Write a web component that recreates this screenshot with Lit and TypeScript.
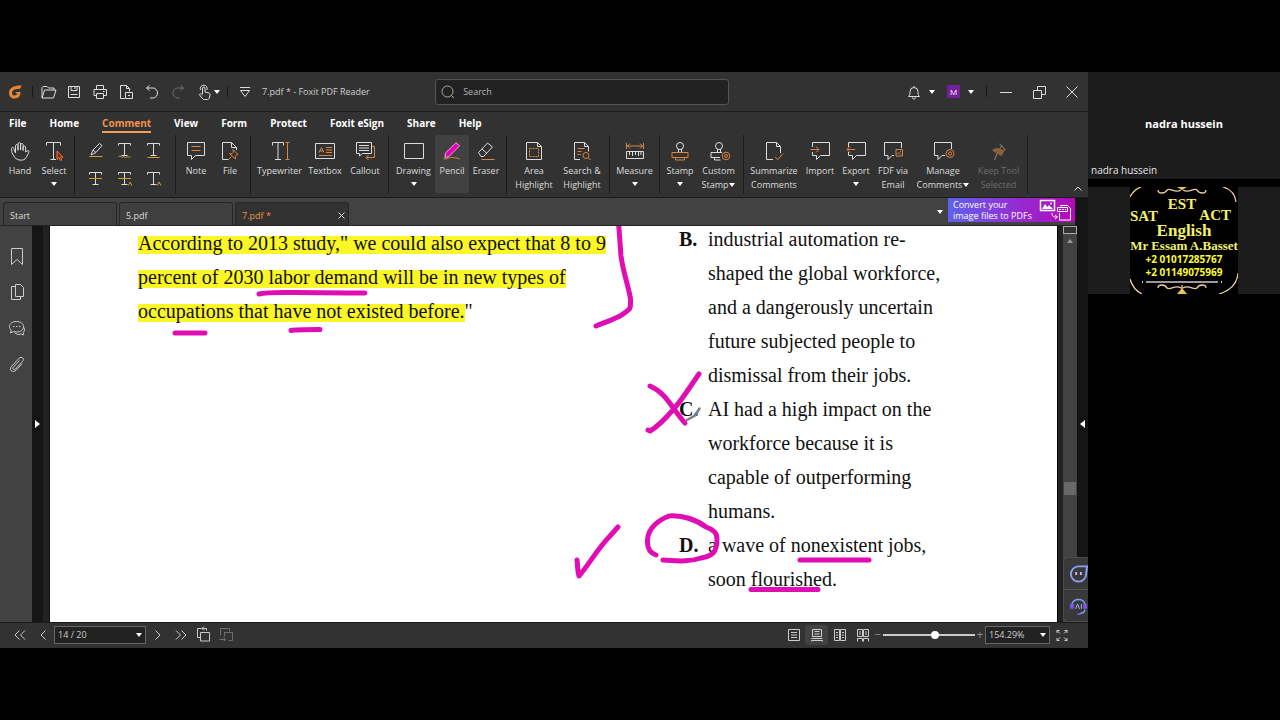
import { LitElement, html, css, svg, nothing } from "lit";
import { customElement, property } from "lit/decorators.js";
import { classMap } from "lit/directives/class-map.js";

/* Icon glyphs on a 20 x 20 grid. Class "o" = orange stroke, "of" = orange fill, "y" = yellow stroke. */
const T = svg`<path d="M3.500 5.500V3.500h12v2M9.500 3.500v12M6.500 15.500h6"/>`;
const bubble = svg`<path d="M1.500 1.500h17v13h-9l-4 4v-4h-4z"/>`;
const icons: Record<string, unknown> = {
  open: svg`<path d="M4 16V5.500l1-1h4l1.500 1.500h5.500v2M4 16l2.500-8h11.500l-2.500 8z"/>`,
  save: svg`<path d="M4.500 4.500h11v11h-11zM7 4.500v4h6v-4M11 5v2M6.500 12.500h7"/>`,
  print: svg`<path d="M6.500 7.500v-4h7v4M6.500 13.500h-2.500v-6h12.500v6h-3M6.500 11.500h7v5h-7zM13 9.500h1.500"/>`,
  docs: svg`<path d="M9 16.500h-4.500v-13h6l3 3v3M10.500 3.500v3h3M9.500 10.500h7v6h-7zM12 13.500h2"/>`,
  undo: svg`<path d="M7.500 3.500l-3 2.500 3 2.500M4.500 6h6.500a4.500 5 0 0 1 0 10h-3"/>`,
  redo: svg`<path d="M12.500 3.500l3 2.500-3 2.500M15.500 6h-6a4.500 5 0 0 0 0 10h2"/>`,
  touch: svg`<path d="M8.500 12V6a1.300 1.300 0 0 1 2.500 0v4l4 1c1 .3 1.200 1 1 2l-.7 3c-.4 1-1 1.500-2 1.500h-3c-1 0-1.500-.5-2-1l-3-4c.8-1.200 2-.8 3.200.5M6.500 8a3.500 3.500 0 1 1 6.500 0"/>`,
  more: svg`<path d="M5 5.500h10M5.500 8.500h9l-4.500 6z"/>`,
  bell: svg`<path d="M4.500 14.500h11c-1.500-1.500-1.500-3-1.500-5a4 4 0 0 0-8 0c0 2 0 3.500-1.500 5zM8.500 15.500a1.500 1.500 0 0 0 3 0M10 4v1.500"/>`,
  min: svg`<path d="M4 10.500h12"/>`,
  restore: svg`<path d="M4.500 8.500h8v8h-8zM8.500 8v-3.500h8v8h-3.500"/>`,
  close: svg`<path d="M4.500 4.500l11 11M15.500 4.500l-11 11"/>`,
  search: svg`<circle cx="9.500" cy="9.500" r="5.500"/><path d="M13.500 13.500l2.500 2.500"/>`,
  hand: svg`<path d="M5.500 12V4.500a1.300 1.300 0 0 1 2.500 0V9.500M8 9V3a1.300 1.300 0 0 1 2.600 0v6M10.600 9V3.500a1.300 1.300 0 0 1 2.500 0V9.500M13.100 9.500V6a1.300 1.300 0 0 1 2.500 0v5l1.400-1c1.500-1 2.500.2 1.800 1.500C17.500 14 16.500 16.500 15 18c-1.500 1.500-6 1.600-8.500 0C4 16 1.500 11.500 1.800 10.500L1.500 7.500c.2-1.500 2-1.500 2.400 0L5.500 12"/>`,
  select: svg`<path d="M2.500 4.500v-3h14v3M9.500 1.500v17M6.500 18.500h5.500"/><path class="sel" d="M13 10v8.500l2-1.800 1.500 2.800 1.200-.6-1.300-2.700h2.600z"/>`,
  hl: svg`<path d="M7 10l6.500-6.500 2.500 2L10 12.500l-5 2.500zM7 10l3 2.500"/><path class="y" d="M3.500 16.500h13"/>`,
  squig: svg`${T}<path class="y" d="M3.500 17c1-1.500 2-1.500 3 0s2-1.500 3 0 2-1.500 3 0 2-1.500 3 0"/>`,
  under: svg`${T}<path class="y" d="M3.500 17.500h12"/>`,
  strike: svg`${T}<path class="y" d="M3 9.500h13"/>`,
  repl: svg`${T}<path class="y" d="M3 9.500h13M13.500 16.500l1.700-3.500 1.800 3.500"/>`,
  ins: svg`${T}<path class="y" d="M13.500 16.500l1.700-3.500 1.800 3.500"/>`,
  note: svg`${bubble}<path class="o" d="M5.500 5.500h9M5.500 9.500h9"/>`,
  file: svg`<path d="M8 18.500H2.500v-17h9l5 5V9M11.500 1.500v5h5"/><path class="o" d="M13 8.500l5 5-1.500.5-1.200 1.500.2 2.500-6-5.500 2.500.2 1.300-1.500zM11.500 15.500l-3.500 3.500"/>`,
  type: svg`<path d="M2.500 4.500v-3h11v3M8 1.500v17M5 18.500h6"/><path class="o" d="M15.500 1.500h4M17.500 1.500v17M15.500 18.500h4"/>`,
  tbox: svg`<path d="M.5 2.500h19v15H.5z"/><path class="o" d="M4 11.500l2.500-5 2.500 5M5 10h3M11 6.500h6M11 9h6M11 11.500h6M4 14.500h13"/>`,
  callout: svg`<path d="M1.500 1.500h15v11h-9l-3 2.500v-2.500h-3zM4 4.500h10M4 7h10M4 9.500h10"/><path class="o" d="M17 5.500h2.500v11h-8M13.500 14l-2.500 2.500 2.500 2.500"/>`,
  rect: svg`<path d="M.5 2.500h19v15H.5z"/>`,
  pencil: svg`<path class="pk" d="M3.500 12L14 1.800l3.500 3L7 15.500l-4 1z"/><path class="o" d="M1.500 18c4 .5 6-2.500 9-1.500 2 .7 3-.5 7 1.500"/>`,
  eraser: svg`<path d="M2.500 11.500l9-9.500 5 4-9 9.500h-2.500zM6 8l5 4.500"/><path class="o" d="M5.500 18.500h13"/>`,
  area: svg`<path d="M2.500 1.500h11l4 4v13h-15zM13.500 1.500v4h4"/><path class="o" stroke-dasharray="2 1" d="M5.500 7.500h9v8h-9z"/>`,
  srch: svg`<path d="M8 18.500H2.500v-17h10l4 4v5M12.500 1.500v4h4"/><path class="o" d="M5.500 7.500h7M5.500 10.500h4M5.500 13.500h3"/><circle class="o" cx="14" cy="14.500" r="3"/><path class="o" d="M16.500 17l2 2"/>`,
  measure: svg`<path class="o" d="M1.500 2v6M18.500 2v6M2.500 5h15M5 2.500L2.500 5 5 7.500M15 2.500L17.500 5 15 7.500"/><path d="M1.500 10.500h17v7h-17zM4.500 11v3M7.500 11v4M10.500 11v3M13.500 11v4M16 11v3"/>`,
  stamp: svg`<circle cx="10" cy="5" r="3.500"/><path d="M8.500 8v3.500M11.500 8v3.500"/><path class="o" d="M2 11.500h16v5H2zM5.500 16.500v2.500h9v-2.500"/>`,
  cstamp: svg`<circle cx="10" cy="5" r="3.500"/><path d="M8.500 8v3.500M11.500 8v3.500M13 11.500H2v5h9M5.500 16.500v2.500h6"/><circle class="o" cx="17" cy="15" r="3.800"/><circle class="o" cx="17" cy="15" r="1.500"/>`,
  summ: svg`<path d="M9 18.500H2.500v-17h10l4 4V12M12.500 1.500v4h4"/><path class="o" d="M11 16l3 2.500 5-6"/>`,
  imp: svg`<path d="M2.500 6v-4.500h17v13h-9l-4 4v-4h-4V11"/><path class="o" d="M.5 8.500h8M6 5.500l3 3-3 3"/>`,
  exp: svg`<path d="M2.500 6v-4.500h17v13h-9l-4 4v-4h-4V11"/><path class="o" d="M1 8.500h8M4 5.500l-3 3 3 3"/>`,
  fdf: svg`<path d="M11 14.500h-2l-4 4v-4h-3.500v-13h17V7"/><path class="o" d="M13 8.500h6.500v6.500H13zM14 13.500l2-2 2 2M17 10.500h1"/>`,
  manage: svg`<path d="M12 14.500h-3l-4 4v-4h-3.500v-13h17V8"/><circle class="o" cx="17" cy="12.500" r="4"/><circle class="o" cx="17" cy="12.500" r="1.600"/>`,
  pin: svg`<path d="M10.500 3l6 5.500M13 4.500l-2 3M15.500 7.500l-1 3M8 13l-2.500 6"/><path class="of" d="M3 9.500c3-3.500 8-3 11-.5l1 1.500c-.5 1.500-1.500 3-2.500 4.500l-4-2z"/>`,
  bookmark: svg`<path d="M4.500 1.500h11v16l-5.500-5-5.500 5z"/>`,
  pages: svg`<path d="M8.500 1.500v12h8v-9l-3-3h-5zM8.500 3.500h-4v13h9v-3"/>`,
  chat: svg`<path d="M9.500 2.500c4 0 7 2 7 5.200s-3 5.300-7 5.300c-1 0-2-.2-3-.5l-3 1.500.7-3C3 10 2.500 9 2.500 7.700c0-3.200 3-5.200 7-5.200zM16.500 8c1.500 2 1.200 4-.3 5.500l.3 2.500-2.500-1c-2.500 1-5 .3-6.500-1.500M6 7.500h1.500M9 7.500h1.500M12 7.500h1.500"/>`,
  clip: svg`<path d="M12.500 5.500l-6 6.500c-1.500 2 .5 3.500 2 2l7-7.500c2.500-3-1-5.500-3.500-3.200l-7.500 8c-3 3.700 1.200 7 4.500 4l6-6.500"/>`,
  first: svg`<path d="M9.500 5.500L5 10l4.500 4.500M15 5.500L10.500 10l4.500 4.500"/>`,
  prev: svg`<path d="M12.500 5.500L8 10l4.500 4.500"/>`,
  next: svg`<path d="M7.500 5.500L12 10l-4.500 4.500"/>`,
  last: svg`<path d="M5 5.500L9.500 10 5 14.500M10.500 5.500L15 10l-4.500 4.500"/>`,
  viewb: svg`<path d="M6 12.500H3.500v-9h4M12.500 5.500v-2H8M10 1.500l-2 2 2 2M6.500 7.500h9v8.500h-9z"/>`,
  viewf: svg`<path d="M3.500 10.500v-7h9v3M7.500 7.500h8v8h-4M7.500 7.500v4M2.500 14.500h6M6.500 12.500l2 2-2 2"/>`,
  v1: svg`<path d="M4.500 4.500h11v11h-11zM7 7.500h6M7 10h6M7 12.500h6"/>`,
  v2: svg`<path d="M5.500 4.500h9v7h-9zM7.500 6.500h5M7.500 9h5M4.500 13.500h11M4.500 16.500v-1h11v1"/>`,
  v3: svg`<path d="M4.500 4.500h5v11h-5zM10.500 4.500h5v11h-5zM6 7.500h2M6 10h2M6 12.500h2M12 7.500h2M12 10h2M12 12.500h2"/>`,
  v4: svg`<path d="M4.500 4.500h5v7h-5zM10.500 4.500h5v7h-5zM6 7h2M6 9h2M12 7h2M12 9h2M4.500 16.500v-3h5v3M10.500 16.500v-3h5v3"/>`,
  full: svg`<path d="M8 8.500L5 5.500M5 8V5.500h2.500M12 8.500l3-3M12.500 5.500H15V8M8 12.500l-3 3M5 13v2.500h2.500M12 12.500l3 3M12.500 15.500H15V13"/>`,
  up: svg`<path d="M6.500 11.500L10 8l3.500 3.500"/>`,
};

@customElement("ui-icon")
export class UiIcon extends LitElement {
  @property() name = "";
  static styles = css`
    :host { display: block; width: 20px; height: 20px; flex: none; }
    svg { display: block; fill: none; stroke: currentColor; overflow: visible; }
    .o { stroke: #d9843f; }
    .of { fill: #d9843f; stroke: none; }
    .y { stroke: #c9a227; }
    .sel { fill: #8a2a12; stroke: #e8743a; }
    .pk { fill: #e600b8; stroke: #f2a6dd; }
  `;
  render() {
    return html`<svg width="20" height="20" viewBox="0 0 20 20" aria-hidden="true">${icons[this.name]}</svg>`;
  }
}

const caret = html`<svg class="caret" width="6" height="4" viewBox="0 0 6 4" aria-hidden="true"><path d="M0 0h6L3 4z" fill="#fff" /></svg>`;

type Tool = { icon: string; w: string; text: string; text2?: string; drop?: boolean; on?: boolean; off?: boolean };
const groups: (Tool[] | "markup")[] = [
  [{ icon: "hand", w: "w34", text: "Hand" }, { icon: "select", w: "w34", text: "Select", drop: true }],
  "markup",
  [{ icon: "note", w: "w34", text: "Note" }, { icon: "file", w: "w34", text: "File" }],
  [{ icon: "type", w: "w51", text: "Typewriter" }, { icon: "tbox", w: "w40", text: "Textbox" }, { icon: "callout", w: "w40", text: "Callout" }],
  [{ icon: "rect", w: "w43", text: "Drawing", drop: true }, { icon: "pencil", w: "w34", text: "Pencil", on: true }, { icon: "eraser", w: "w34", text: "Eraser" }],
  [{ icon: "area", w: "w48", text: "Area", text2: "Highlight" }, { icon: "srch", w: "w48", text: "Search &", text2: "Highlight" }],
  [{ icon: "measure", w: "w43", text: "Measure", drop: true }],
  [{ icon: "stamp", w: "w34", text: "Stamp", drop: true }, { icon: "cstamp", w: "w43", text: "Custom", text2: "Stamp", drop: true }],
  [
    { icon: "summ", w: "w54", text: "Summarize", text2: "Comments" },
    { icon: "imp", w: "w38", text: "Import" },
    { icon: "exp", w: "w34", text: "Export", drop: true },
    { icon: "fdf", w: "w40", text: "FDF via", text2: "Email" },
    { icon: "manage", w: "w60", text: "Manage", text2: "Comments", drop: true },
    { icon: "pin", w: "w51", text: "Keep Tool", text2: "Selected", off: true },
  ],
];

const markup = [
  ["hl", "Highlight"], ["squig", "Squiggly underline"], ["under", "Underline"],
  ["strike", "Strikeout"], ["repl", "Replace text"], ["ins", "Insert text"],
];
const menus = ["File", "Home", "Comment", "View", "Form", "Protect", "Foxit eSign", "Share", "Help"];

const iconBtn = (icon: string, label: string, cls = "") =>
  html`<button class="ib ${cls}" aria-label=${label}><ui-icon name=${icon}></ui-icon></button>`;

@customElement("app-root")
export class AppRoot extends LitElement {
  static styles = css`
    :host {
      display: grid;
      grid-template-columns: minmax(0, 85fr) minmax(0, 15fr);
      box-sizing: border-box;
      min-height: 100vh;
      padding: 72px 0;
      background: #000;
      color: #dcdcdc;
      font: 9px/14px "Open Sans", "Noto Sans", sans-serif;
    }
    * { box-sizing: border-box; }
    button, input, select { font: inherit; color: inherit; background: none; border: 0; padding: 0; margin: 0; }
    button { display: flex; align-items: center; justify-content: center; }
    a { color: inherit; text-decoration: none; }
    .reader { display: flex; flex-direction: column; background: #323232; min-width: 0; overflow: hidden; }

    .titlebar { display: grid; grid-template-columns: 40% 27% 1fr; align-items: center; height: 40px; border-bottom: 1px solid #1d1d1d; }
    .quick, .window { display: flex; align-items: center; }
    .window { justify-content: flex-end; }
    .ib { width: 26px; height: 26px; }
    .logo { width: 30px; }
    .vsep { width: 1px; height: 11px; background: #181818; margin: 0 2px; }
    .vsep.roomy { margin: 0 4px; }
    .vsep.far { margin-left: 12px; }
    .touch { width: 32px; height: 26px; }
    .bell { gap: 5px; }
    .caret { display: block; flex: none; }
    .dim { color: #6e6e6e; }
    .title { margin-left: 4px; white-space: nowrap; color: #cfcfcf; }
    .search { display: flex; align-items: center; height: 26px; gap: 5px; padding-left: 2px; border: 1px solid #555; border-radius: 3px; background: #222; color: #aaa; }
    .search input { flex: 1; min-width: 0; outline: 0; }
    .search input::placeholder { color: #b4b4b4; opacity: 1; }
    .avatar { width: 13px; height: 13px; margin: 0 8px 0 12px; background: #75209a; color: #fff; font-size: 8px; }
    .wide { width: 33px; }

    .menu { display: flex; gap: 23px; padding: 4px 9px 0; height: 23px; color: #fff; font-size: 10px; font-weight: 700; white-space: nowrap; }
    .menu a { height: 17px; }
    .menu .current { color: #f0924a; border-bottom: 2px solid #f0a05c; }

    .ribbon { display: flex; position: relative; height: 63px; border-bottom: 1px solid #1c1c1c; }
    .group { display: flex; height: 59px; padding: 0 3px; border-right: 1px solid #1c1c1c; }
    .markup { display: grid; grid-template-columns: repeat(3, 29px); grid-template-rows: 29px 29px; padding: 0 7px 0 6px; }
    .mk { width: 29px; height: 29px; }
    .tool { flex-direction: column; justify-content: flex-start; padding-top: 6px; height: 58px; border-radius: 2px; white-space: nowrap; }
    .tool ui-icon { margin-bottom: 3px; }
    .tool .caret { margin-top: 4px; }
    .second { display: flex; align-items: center; }
    .tool .second .caret { margin: 0 0 0 1px; }
    .on { background: #414141; }
    .off { color: #6c6c6c; }
    .off ui-icon { opacity: 0.55; color: #ccc; }
    .w34 { width: 34px; } .w38 { width: 38px; } .w40 { width: 40px; } .w43 { width: 43px; }
    .w48 { width: 48px; } .w51 { width: 51px; } .w54 { width: 54px; } .w60 { width: 60px; }
    .collapse { align-self: flex-end; margin-left: auto; width: 20px; height: 16px; }

    .backdrop { background: #151515; }
    .tabs { display: flex; align-items: flex-end; height: 28px; margin-right: 13px; padding-left: 3px; gap: 2px; background: #424242; border-bottom: 1px solid #222; }
    .tab { display: flex; align-items: center; justify-content: space-between; width: 114px; height: 23px; padding: 3px 0 0 6px; border: 1px solid #262626; border-bottom: 0; border-radius: 3px 3px 0 0; background: #3f3f3f; }
    .tab.active { background: #323232; color: #f0924a; }
    .tab button { width: 14px; color: #ddd; }
    .fill { flex: 1; }
    .tablist { width: 12px; height: 27px; }
    .promo { display: flex; align-items: center; align-self: flex-start; justify-content: space-between; width: 127px; height: 24px; padding: 0 4px 0 5px; color: #fff; line-height: 11px; white-space: nowrap; background: linear-gradient(90deg, #5c62ee, #9030d4 50%, #b508b8); }
    .promo svg { flex: none; overflow: visible; }

    .work { display: flex; flex: 1; min-height: 0; position: relative; background: #151515; }
    .nav { display: flex; flex-direction: column; align-items: center; gap: 16px; width: 32px; padding: 21px 0 0 2px; background: #424242; color: #ccc; }
    .nav .ib { width: 20px; height: 20px; }
    .strip { display: flex; align-items: center; justify-content: center; width: 11px; }
    .gutter { width: 7px; background: #222; border-right: 1px solid #111; }
    .page { position: relative; flex: 1; min-width: 0; min-height: 396px; overflow: hidden; background: #fff; color: #111; font: 20px/34px "Liberation Serif", "Times New Roman", serif; }
    .columns { display: grid; grid-template-columns: 541px 1fr; padding-left: 88px; }
    .passage { margin: 0; max-width: 490px; }
    mark { color: inherit; background: linear-gradient(transparent 4px, #fbf726 4px); -webkit-box-decoration-break: clone; box-decoration-break: clone; }
    .choices { list-style: none; margin: -4px 0 0; padding: 0; }
    .choices li { display: grid; grid-template-columns: 29px minmax(0, 240px); }
    .ink { position: absolute; left: 0; top: 0; fill: none; stroke: #e00cb4; stroke-width: 5; stroke-linecap: round; stroke-linejoin: round; }
    .scroll { display: flex; flex-direction: column; align-items: center; width: 14px; background: #424242; }
    .split { width: 14px; height: 8px; border: 1px solid #aaa; background: #333; }
    .arrow { margin: 5px 0 auto; }
    .thumb { width: 12px; height: 13px; margin-bottom: 127px; background: #686868; }
    .rgut { width: 6px; background: #222; border-left: 1px solid #000; }
    .ai { position: absolute; right: 0; bottom: 0; display: flex; flex-direction: column; width: 25px; height: 65px; background: #393939; border: 1px solid #4c4c4c; border-right: 0; border-radius: 5px 0 0 5px; }
    .ai button { flex: 1; padding-left: 5px; overflow: hidden; }
    .ai button + button { border-top: 1px solid #555; }

    .status { display: flex; align-items: center; height: 26px; padding: 0 15px 1px 8px; border-top: 1px solid #1a1a1a; color: #ccc; }
    .status .ib { width: 23px; height: 20px; }
    .combo { display: flex; align-items: center; position: relative; height: 18px; border: 1px solid #666; background: #222; }
    .combo select { appearance: none; width: 100%; height: 16px; padding-left: 3px; outline: 0; }
    .combo .caret { position: absolute; right: 3px; top: 6px; pointer-events: none; }
    .pageno { width: 92px; }
    .zoomv { width: 65px; margin-left: 1px; }
    .status .lit { background: #424242; border-radius: 3px; }
    .pm { width: 8px; color: #888; font-size: 12px; }
    input[type="range"] { appearance: none; width: 92px; height: 12px; margin: 0 1px; outline: 0; }
    input[type="range"]::-webkit-slider-runnable-track { height: 2px; background: #ccc; }
    input[type="range"]::-webkit-slider-thumb { appearance: none; width: 8px; height: 8px; margin-top: -3px; border-radius: 50%; background: #fff; }

    .people { display: flex; flex-direction: column; gap: 8px; min-width: 0; }
    .tile { display: flex; position: relative; height: 107px; align-items: center; justify-content: center; background: #1c1c1c; }
    .who { margin: 0 0 4px; color: #fff; font-size: 11px; font-weight: 700; }
    .caption { position: absolute; left: 0; bottom: 1px; padding: 0 3px; color: #e6e6e6; font-size: 10px; line-height: 16px; }
    .card { display: flex; flex-direction: column; align-items: center; position: relative; width: 108px; height: 107px; padding-top: 9px; background: #000; color: #f3f06a; font: 700 15px/16px "Liberation Serif", serif; white-space: nowrap; overflow: hidden; }
    .card svg { position: absolute; inset: 0; fill: none; stroke: #e8d0a0; stroke-width: 1.3; }
    .exams { display: grid; grid-template-columns: 1fr 1fr 1fr; width: 100%; height: 27px; text-align: center; }
    .side { padding-top: 12px; text-align: left; }
    .side.end { padding: 11px 7px 0 0; text-align: right; }
    .subject { font-size: 17px; line-height: 16px; }
    .teacher { font-size: 13px; line-height: 14px; }
    .phone { color: #fdfb2c; font: 700 10px/13px "Open Sans", sans-serif; }
  `;

  private tool(t: Tool) {
    return html`<button class=${classMap({ tool: true, [t.w]: true, on: !!t.on, off: !!t.off })}>
      <ui-icon name=${t.icon}></ui-icon>
      <span>${t.text}</span>
      ${t.text2 ? html`<span class="second">${t.text2}${t.drop ? caret : nothing}</span>` : t.drop ? caret : nothing}
    </button>`;
  }

  render() {
    return html`
      <main class="reader">
        <header class="titlebar">
          <div class="quick">
            <button class="logo" aria-label="Foxit">
              <svg width="14" height="14" viewBox="0 0 14 14"><path d="M13.500.5C8 0 1 1.500 1 8c0 3.500 2.500 5.500 5.500 5.500 4 0 6-2.800 6-6.500H7.500c0 1.500 1 1.500 2 1.500-.5 1.300-1.500 2-3 2-1.600 0-2.500-1-2.500-2.500C4 4.500 8 3.500 11.500 4c1-.8 1.800-2 2-3.500z" fill="#ee8430" /></svg>
            </button>
            <span class="vsep"></span>
            ${iconBtn("open", "Open")}${iconBtn("save", "Save")}${iconBtn("print", "Print")}${iconBtn("docs", "Create")}${iconBtn("undo", "Undo")}${iconBtn("redo", "Redo", "dim")}
            <button class="touch" aria-label="Touch mode"><ui-icon name="touch"></ui-icon>${caret}</button>
            <span class="vsep roomy"></span>
            ${iconBtn("more", "Customize toolbar")}
            <span class="title">7.pdf * - Foxit PDF Reader</span>
          </div>
          <label class="search"><ui-icon name="search"></ui-icon><input type="search" aria-label="Search" placeholder="Search" /></label>
          <div class="window">
            <button class="touch bell" aria-label="Notifications"><ui-icon name="bell"></ui-icon>${caret}</button>
            <button class="avatar" aria-label="Account">M</button>${caret}
            <span class="vsep far"></span>
            ${iconBtn("min", "Minimize", "wide")}${iconBtn("restore", "Restore", "wide")}${iconBtn("close", "Close", "wide")}
          </div>
        </header>
        <nav class="menu">
          ${menus.map((m) => html`<a href="#" class=${classMap({ current: m === "Comment" })}>${m}</a>`)}
        </nav>
        <div class="ribbon">
          ${groups.map((g) =>
            g === "markup"
              ? html`<div class="group markup">${markup.map(([i, l]) => iconBtn(i, l, "mk"))}</div>`
              : html`<div class="group">${g.map((t) => this.tool(t))}</div>`
          )}
          <button class="collapse" aria-label="Collapse ribbon"><ui-icon name="up"></ui-icon></button>
        </div>
        <div class="backdrop">
          <div class="tabs">
            <div class="tab"><span>Start</span></div>
            <div class="tab"><span>5.pdf</span></div>
            <div class="tab active"><span>7.pdf *</span>
              <button aria-label="Close tab"><svg width="7" height="7" viewBox="0 0 7 7" stroke="#ddd"><path d="M.5.5l6 6M6.500.5l-6 6" /></svg></button>
            </div>
            <span class="fill"></span>
            <button class="tablist" aria-label="Tab list">${caret}</button>
            <a class="promo" href="#"><span>Convert your<br />image files to PDFs</span>
              <svg width="34" height="22" viewBox="0 0 34 22" fill="none" stroke="#fff">
                <path d="M3.500 1.500h14v10h-14z" stroke-width="1.500" /><path d="M5 10l3-5 2.500 3L12 6l4 4z" fill="#fff" stroke="none" /><circle cx="14" cy="4.500" r="1" fill="#fff" stroke="none" />
                <path d="M23.500 7.500v-1h7l3 3v11.500h-11v-7M20.500 8.500h10v4h-10z" /><path d="M22 10.500h7" stroke-dasharray="2 1" /><path d="M15 14c0 3 1 4 5 4M18 16l2.500 2L18 20" />
              </svg>
            </a>
          </div>
        </div>

        <div class="work">
          <nav class="nav">
            ${iconBtn("bookmark", "Bookmarks")}${iconBtn("pages", "Pages")}${iconBtn("chat", "Comments")}${iconBtn("clip", "Attachments")}
          </nav>
          <button class="strip" aria-label="Expand panel"><svg width="5" height="8" viewBox="0 0 5 8"><path d="M0 0l5 4-5 4z" fill="#fff" /></svg></button>
          <div class="gutter"></div>
          <article class="page">
            <div class="columns">
              <p class="passage"><mark>According to 2013 study," we could also expect that 8 to 9 percent of 2030 labor demand will be in new types of occupations that have not existed before.</mark>"</p>
              <ol class="choices">
                <li><b>B.</b><span>industrial automation re-shaped the global workforce, and a dangerously uncertain future subjected people to dismissal from their jobs.</span></li>
                <li><b>C.</b><span>AI had a high impact on the workforce because it is capable of outperforming humans.</span></li>
                <li><b>D.</b><span>a wave of nonexistent jobs, soon flourished.</span></li>
              </ol>
            </div>
            <svg class="ink" width="1007" height="396" viewBox="0 0 1007 396" aria-hidden="true">
              <path d="M209 68c8-2 20-1.500 35-1.500s45 .5 71 .5M125 107h30M241 104.500c4-1 8-1 29-1" />
              <path d="M568.500-4L571 30C573 46 579 62 580.500 73C581 83 581 83 570 90C562 94 556 96 546 100" />
              <path d="M600 160c14 6 20 18 27 27 3 4 6 8 8 10M649 148c-12 17-17 26-27 37-7 8-15 16-22 20l-2-1" />
              <path d="M527 334c1 6 0 10 2 16 9-10 19-28 31-40l8-9M606 329c-6-2-9-7-8.500-15 .5-12 11-20 21.500-24 14-1 28 4 37 11 8 3 11 6 11 12 0 14-5 17-16 19-12 4-22 3-38 2M750 334h69M701 363.500h67" />
              <path d="M637 194l8-4.500 4.500-7" stroke="#7c7c86" stroke-width="2.500" />
            </svg>
          </article>
          <div class="rgut"></div>
          <div class="scroll">
            <span class="split"></span>
            <svg class="arrow" width="6" height="4" viewBox="0 0 6 4"><path d="M0 4h6L3 0z" fill="#999" /></svg>
            <span class="thumb"></span>
          </div>
          <button class="strip" aria-label="Expand right panel"><svg width="5" height="8" viewBox="0 0 5 8"><path d="M5 0L0 4l5 4z" fill="#fff" /></svg></button>
          <div class="ai">
            <button aria-label="Assistant">
              <svg width="20" height="20" viewBox="0 0 20 20" fill="none" stroke-width="2"><path d="M19 2h-9a8 8 0 1 0 8 8z" stroke="#8ea0f4" /><path d="M7.500 8v3M12.500 8v3" stroke="#c9b8ff" /></svg>
            </button>
            <button aria-label="AI support">
              <svg width="20" height="20" viewBox="0 0 20 20" fill="none" stroke="#7aa0f0" stroke-width="1.500"><path d="M3 8a7.500 7.500 0 0 1 14 0M17 14c-1 3-3 4-6 4" /><path d="M2 8v5M4 8v5M16 8v5M18 8v5M9 18.500h3" stroke="#7f54e6" stroke-width="2" /><path d="M7 13l2-5 2 5M13 8v5" stroke="#aab4f8" stroke-width="1" /></svg>
            </button>
          </div>
        </div>

        <footer class="status">
          ${iconBtn("first", "First page")}${iconBtn("prev", "Previous page")}
          <span class="combo pageno"><select aria-label="Page"><option>14 / 20</option></select>${caret}</span>
          ${iconBtn("next", "Next page")}${iconBtn("last", "Last page")}${iconBtn("viewb", "Previous view")}${iconBtn("viewf", "Next view", "dim")}
          <span class="fill"></span>
          ${iconBtn("v1", "Single page")}${iconBtn("v2", "Continuous", "lit")}${iconBtn("v3", "Facing")}${iconBtn("v4", "Continuous facing")}
          <button class="pm" aria-label="Zoom out">−</button>
          <input type="range" aria-label="Zoom" min="0" max="100" value="57" />
          <button class="pm" aria-label="Zoom in">+</button>
          <span class="combo zoomv"><select aria-label="Zoom level"><option>154.29%</option></select>${caret}</span>
          ${iconBtn("full", "Full screen")}
        </footer>
      </main>

      <aside class="people">
        <section class="tile"><p class="who">nadra hussein</p><span class="caption">nadra hussein</span></section>
        <section class="tile">
          <div class="card">
            <svg viewBox="0 0 108 107" aria-hidden="true">
              <path d="M0 10C2 6 6 2 11 0M93 0c7 2 12 7 13 15M0 92c2 7 6 12 12 15M108 86c-1 12-9 18-19 21" />
              <path d="M28 3c0 4 7 4 9 0 3-3 8 4 14 0M76 3c0 4-7 4-9 0-3-3-8 4-14 0M28 101c0-4 7-4 9 0 3 3 8-4 14 0M76 101c0-4-7-4-9 0-3 3-8-4-14 0M52 98v6" />
              <path d="M16 95h72" stroke="#d8c8d0" /><path d="M12 95h1M91 95h1" stroke-width="2" /><path d="M47 107l5-6 5 6zM47 0l5 3 5-3z" fill="#e8c060" stroke="none" />
            </svg>
            <div class="exams"><span class="side">SAT</span><span>EST</span><span class="side end">ACT</span></div>
            <span class="subject">English</span>
            <span class="teacher">Mr Essam A.Basset</span>
            <span class="phone">+2 01017285767</span>
            <span class="phone">+2 01149075969</span>
          </div>
        </section>
      </aside>
    `;
  }
}
